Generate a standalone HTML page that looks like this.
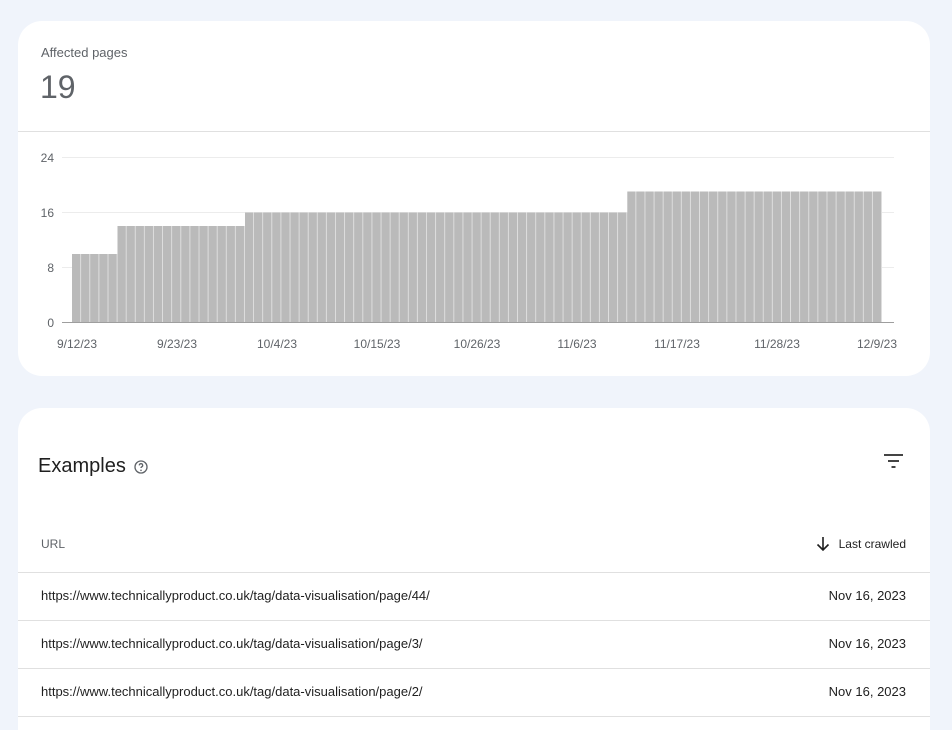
<!DOCTYPE html>
<html style="height:730px;overflow:hidden"><head><style>
body{margin:0;width:952px;height:730px;background:#f0f4fb;font-family:"Liberation Sans",sans-serif;overflow:hidden;position:relative}
.card{position:absolute;left:18px;width:912px;background:#fff;border-radius:24px}
.t{position:absolute;white-space:nowrap}
.row{position:absolute;left:0;width:912px;border-top:1px solid #e0e0e0;height:47px}
.row .u{position:absolute;left:23px;top:15px;font-size:13px;color:#1f1f1f}
.row .d{position:absolute;right:24px;top:15px;font-size:13px;color:#1f1f1f}
</style></head><body>
<div class="card" style="top:21px;height:355px">
 <div class="t" style="left:23px;top:24px;font-size:13px;color:#5f6368">Affected pages</div>
 <div class="t" style="left:22px;top:48px;font-size:32px;color:#5f6368">19</div>
 <div style="position:absolute;left:0;top:110px;width:912px;border-top:1px solid #e0e0e0"></div>
</div>
<svg style="position:absolute;left:0;top:0" width="952" height="380">
 <defs><pattern id="p" x="72" y="0" width="9.101" height="400" patternUnits="userSpaceOnUse"><rect x="8.3" y="0" width="0.9" height="400" fill="#e6e6e6"/></pattern></defs>
 <g stroke="#ececec" stroke-width="1"><line x1="62" x2="894" y1="157.5" y2="157.5"/><line x1="62" x2="894" y1="212.5" y2="212.5"/><line x1="62" x2="894" y1="267.5" y2="267.5"/></g>
 <path d="M72 322V254H117.5V226H245V212.5H627.3V191.5H882V322Z" fill="#bababa"/>
 <path d="M72 322V254H117.5V226H245V212.5H627.3V191.5H882V322Z" fill="url(#p)"/>
 <line x1="62" x2="894" y1="322.5" y2="322.5" stroke="#9e9e9e"/>
 <g font-size="12" fill="#5f6368" font-family="Liberation Sans" text-anchor="end">
  <text x="54" y="162">24</text><text x="54" y="217">16</text><text x="54" y="272">8</text><text x="54" y="327">0</text>
 </g>
 <g font-size="12" fill="#5f6368" font-family="Liberation Sans" text-anchor="middle">
  <text x="77" y="348">9/12/23</text><text x="177" y="348">9/23/23</text><text x="277" y="348">10/4/23</text><text x="377" y="348">10/15/23</text><text x="477" y="348">10/26/23</text><text x="577" y="348">11/6/23</text><text x="677" y="348">11/17/23</text><text x="777" y="348">11/28/23</text><text x="877" y="348">12/9/23</text>
 </g>
</svg>
<div class="card" style="top:408px;height:322px;border-radius:24px 24px 0 0">
 <div class="t" style="left:20px;top:47px;font-size:20px;color:#1f1f1f">Examples</div>
 <svg style="position:absolute;left:115px;top:51px" width="16" height="16" viewBox="0 0 24 24"><circle cx="12" cy="12" r="9" fill="none" stroke="#5f6368" stroke-width="2"/><path d="M9.5 9.5a2.5 2.5 0 1 1 3.5 2.3c-.7.4-1 .9-1 1.7" fill="none" stroke="#5f6368" stroke-width="2"/><circle cx="12" cy="17" r="1.2" fill="#5f6368"/></svg>
 <svg style="position:absolute;left:866px;top:46px" width="20" height="16"><rect x="0" y="0" width="19" height="2" fill="#444"/><rect x="4" y="6" width="11" height="2" fill="#444"/><rect x="7.5" y="12" width="4" height="2" fill="#444"/></svg>
 <div class="t" style="left:23px;top:129px;font-size:12px;color:#5f6368">URL</div>
 <svg style="position:absolute;left:798px;top:128px" width="14" height="16"><path d="M7 1V14M1.5 8.5L7 14L12.5 8.5" stroke="#1f1f1f" stroke-width="1.6" fill="none"/></svg>
 <div class="t" style="right:24px;top:129px;font-size:12px;color:#1f1f1f">Last crawled</div>
 <div class="row" style="top:164px"><div class="u">https://www.technicallyproduct.co.uk/tag/data-visualisation/page/44/</div><div class="d">Nov 16, 2023</div></div>
 <div class="row" style="top:212px"><div class="u">https://www.technicallyproduct.co.uk/tag/data-visualisation/page/3/</div><div class="d">Nov 16, 2023</div></div>
 <div class="row" style="top:260px"><div class="u">https://www.technicallyproduct.co.uk/tag/data-visualisation/page/2/</div><div class="d">Nov 16, 2023</div></div>
 <div class="row" style="top:308px;height:13px"></div>
</div>
</body></html>
